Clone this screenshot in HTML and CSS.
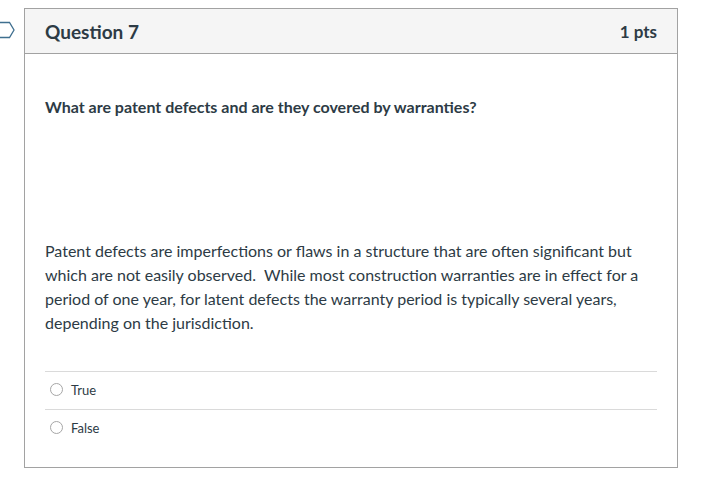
FILE: index.html
```html
<!DOCTYPE html>
<html>
<head>
<meta charset="utf-8">
<link rel="stylesheet" href="styles.css">
</head>
<body>
<div class="page">
  <div class="flag-col">
    <svg class="flag" width="16" height="18" viewBox="0 0 16 18"><path d="M-2 1.5 H9.5 L14 9 L9.5 16.5 H-2" fill="none" stroke="#3f6f8f" stroke-width="1.3"/></svg>
  </div>
  <div class="card">
    <div class="card-header">
      <span class="q-title">Question 7</span>
      <span class="q-pts">1 pts</span>
    </div>
    <div class="card-body">
      <p class="q-text">What are patent defects and are they covered by warranties?</p>
      <p class="q-para">Patent defects are imperfections or flaws in a structure that are often significant but which are not easily observed.&nbsp; While most construction warranties are in effect for a period of one year, for latent defects the warranty period is typically several years, depending on the jurisdiction.</p>
      <div class="answers">
        <label class="answer"><span class="radio"></span><span class="a-label">True</span></label>
        <label class="answer"><span class="radio"></span><span class="a-label">False</span></label>
      </div>
    </div>
  </div>
</div>
</body>
</html>
```

FILE: styles.css
```css
html, body {
  margin: 0;
  padding: 0;
  background: #ffffff;
}
body {
  font-family: Lato, "Open Sans", sans-serif;
  color: #2d3b45;
}
.page {
  display: flex;
  align-items: flex-start;
  padding-top: 8px;
}
.flag-col {
  width: 24px;
  flex: 0 0 24px;
  padding-top: 13px;
}
.flag {
  display: block;
}
.card {
  width: 652px;
  border: 1px solid #a2a2a2;
  background: #fff;
}
.card-header {
  height: 45px;
  box-sizing: border-box;
  background: #f5f5f5;
  border-bottom: 1px solid #a2a2a2;
  padding: 0 20px;
  display: flex;
  align-items: center;
  justify-content: space-between;
}
.q-title {
  font-weight: 700;
  font-size: 19px;
}
.q-pts {
  font-weight: 700;
  font-size: 17px;
}
.card-body {
  padding: 43px 20px 20px 20px;
}
.q-text {
  margin: 0;
  font-weight: 700;
  font-size: 16px;
  line-height: 20px;
}
.q-para {
  margin: 122px 0 0 0;
  font-size: 16px;
  line-height: 24px;
}
.answers {
  margin-top: 36px;
  border-top: 1px solid #dadada;
}
.answer {
  display: flex;
  align-items: center;
  height: 35px;
  padding-bottom: 2px;
  border-bottom: 1px solid #dadada;
  padding-left: 5px;
}
.answer:last-child {
  border-bottom: none;
}
.radio {
  width: 11px;
  height: 11px;
  border: 1px solid #a6a6a6;
  border-radius: 50%;
  margin-right: 8px;
  background: #fff;
}
.a-label {
  font-size: 13px;
}
```
